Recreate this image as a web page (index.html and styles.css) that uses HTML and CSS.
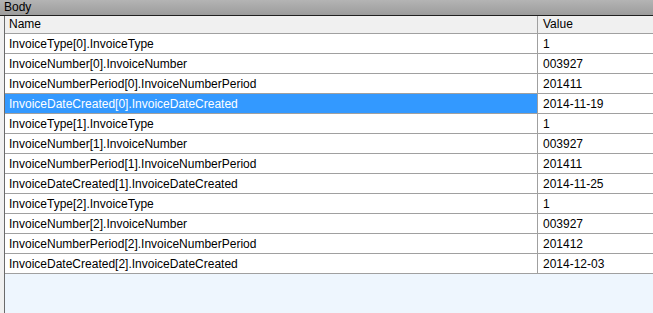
FILE: index.html
```html
<!DOCTYPE html>
<html lang="en">
<head>
  <meta charset="UTF-8" />
  <title>Body</title>
  <link rel="stylesheet" href="styles.css">
</head>
<body>

<div class="panel">
  <div class="panel-title">Body</div>

  <div class="panel-body">
    <div class="grid">
      <div class="grid-row grid-head">
        <div class="cell name">Name</div>
        <div class="cell value">Value</div>
      </div>

      <div class="grid-row">
        <div class="cell name">InvoiceType[0].InvoiceType</div>
        <div class="cell value">1</div>
      </div>
      <div class="grid-row">
        <div class="cell name">InvoiceNumber[0].InvoiceNumber</div>
        <div class="cell value">003927</div>
      </div>
      <div class="grid-row">
        <div class="cell name">InvoiceNumberPeriod[0].InvoiceNumberPeriod</div>
        <div class="cell value">201411</div>
      </div>
      <div class="grid-row selected">
        <div class="cell name">InvoiceDateCreated[0].InvoiceDateCreated</div>
        <div class="cell value">2014-11-19</div>
      </div>
      <div class="grid-row">
        <div class="cell name">InvoiceType[1].InvoiceType</div>
        <div class="cell value">1</div>
      </div>
      <div class="grid-row">
        <div class="cell name">InvoiceNumber[1].InvoiceNumber</div>
        <div class="cell value">003927</div>
      </div>
      <div class="grid-row">
        <div class="cell name">InvoiceNumberPeriod[1].InvoiceNumberPeriod</div>
        <div class="cell value">201411</div>
      </div>
      <div class="grid-row">
        <div class="cell name">InvoiceDateCreated[1].InvoiceDateCreated</div>
        <div class="cell value">2014-11-25</div>
      </div>
      <div class="grid-row">
        <div class="cell name">InvoiceType[2].InvoiceType</div>
        <div class="cell value">1</div>
      </div>
      <div class="grid-row">
        <div class="cell name">InvoiceNumber[2].InvoiceNumber</div>
        <div class="cell value">003927</div>
      </div>
      <div class="grid-row">
        <div class="cell name">InvoiceNumberPeriod[2].InvoiceNumberPeriod</div>
        <div class="cell value">201412</div>
      </div>
      <div class="grid-row">
        <div class="cell name">InvoiceDateCreated[2].InvoiceDateCreated</div>
        <div class="cell value">2014-12-03</div>
      </div>
    </div>
  </div>
</div>

</body>
</html>
```

FILE: styles.css
```css
/* Property grid panel */
* {
  box-sizing: border-box;
  margin: 0;
  padding: 0;
}

body {
  font-family: "Liberation Sans", Arial, sans-serif;
  font-size: 12px;
  color: #000;
  background: #f0f0f0;
  overflow: hidden;
}

.panel {
  display: flex;
  flex-direction: column;
  height: 100vh;
}

.panel-title {
  height: 16px;
  line-height: 14px;
  padding-left: 4px;
  background: linear-gradient(#b4b4b4, #9c9c9c);
  border-bottom: 1px solid #202020;
}

.panel-body {
  flex: 1;
  padding-left: 4px;
  display: flex;
}

.grid {
  flex: 1;
  background: #eef6fe;
  border-left: 1px solid #6a6a6a;
}

.grid-row {
  display: grid;
  grid-template-columns: 532px 1fr;
  height: 20px;
  background: #fff;
  border-bottom: 1px solid #a0a0a0;
}

.grid-head {
  height: 18px;
  background: #f0f0f0;
}

.cell {
  padding-left: 4px;
  line-height: 20px;
  white-space: nowrap;
  overflow: hidden;
}

.grid-head .cell {
  line-height: 17px;
}

.cell.value {
  border-left: 1px solid #a0a0a0;
  padding-left: 5px;
}

.selected .name {
  background: #3399ff;
  color: #fff;
}
```
